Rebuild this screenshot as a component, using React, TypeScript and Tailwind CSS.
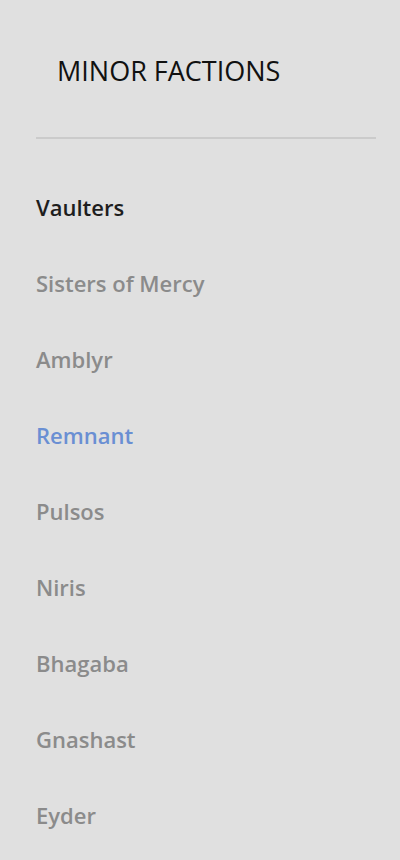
const factions = [
  { name: "Vaulters", tone: "active" },
  { name: "Sisters of Mercy", tone: "muted" },
  { name: "Amblyr", tone: "muted" },
  { name: "Remnant", tone: "link" },
  { name: "Pulsos", tone: "muted" },
  { name: "Niris", tone: "muted" },
  { name: "Bhagaba", tone: "muted" },
  { name: "Gnashast", tone: "muted" },
  { name: "Eyder", tone: "muted" },
];

const toneClass: Record<string, string> = {
  active: "text-[#1e1e1e]",
  muted: "text-[#8b8b8b]",
  link: "text-[#6a8fd3]",
};

export default function App() {
  return (
    <div className="min-h-[860px] w-full bg-[#e0e0e0] pl-9 pr-6 font-['Open_Sans',sans-serif]">
      <h1 className="pl-[21px] pt-[52px] text-[27px] leading-[38px] font-medium text-[#111]">
        MINOR FACTIONS
      </h1>
      <div className="mt-[47px] h-[2px] bg-[#cbcbcb]" />
      <ul className="mt-[30px]">
        {factions.map((f) => (
          <li
            key={f.name}
            className={`flex h-[76px] items-center text-[22px] font-semibold ${toneClass[f.tone]}`}
          >
            {f.name}
          </li>
        ))}
      </ul>
    </div>
  );
}
